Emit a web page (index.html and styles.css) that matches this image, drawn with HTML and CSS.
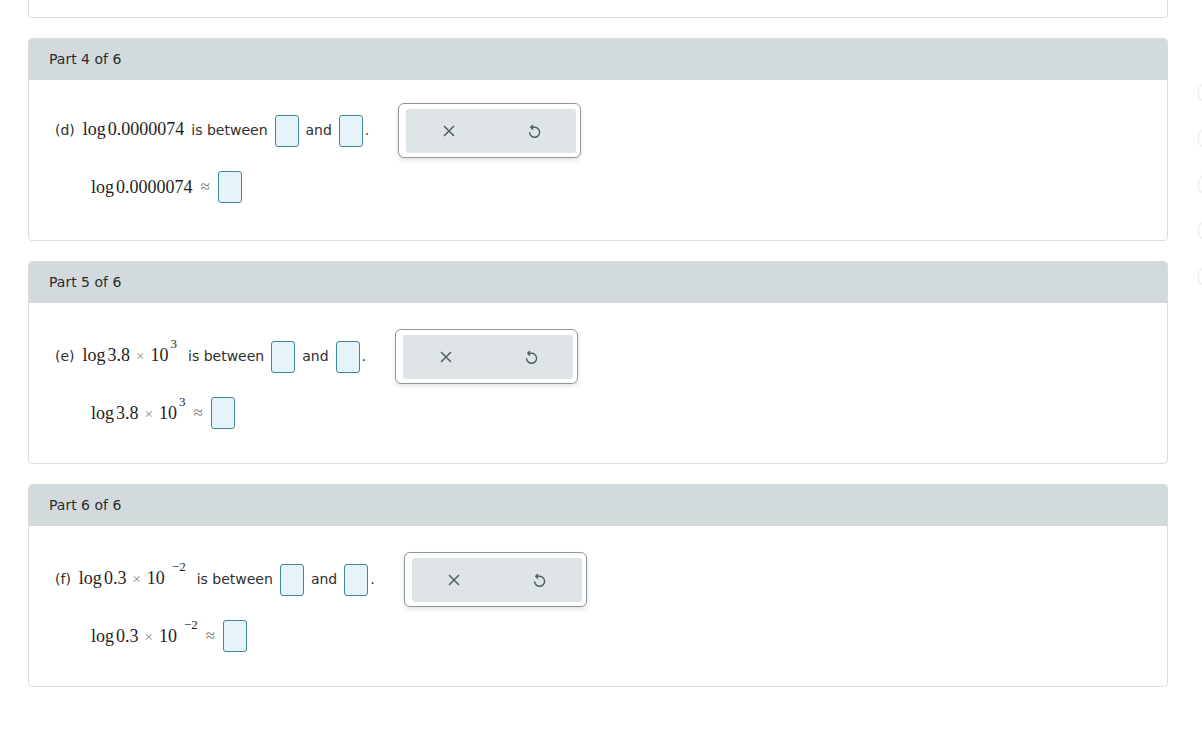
FILE: index.html
```html
<!DOCTYPE html>
<html>
<head>
<meta charset="utf-8">
<link rel="stylesheet" href="styles.css">
</head>
<body>
<div class="page">
  <div class="card-tail"></div>

  <section class="card">
    <div class="card-head">Part 4 of 6</div>
    <div class="card-body">
      <div class="row">
        <div class="q"><span class="lbl">(d)</span><span class="m"><span class="fn">log</span>0.0000074</span><span class="t">is between</span><span class="box"></span><span class="t">and</span><span class="box"></span><span class="dot">.</span></div>
        <div class="actions">
          <div class="actions-in">
            <button class="act"><svg width="14" height="14" viewBox="0 0 14 14"><path d="M2 2 L12 12 M12 2 L2 12" stroke="#4d5f66" stroke-width="1.5" fill="none"/></svg></button>
            <button class="act"><svg width="16" height="16" viewBox="0 0 16 16"><path d="M3.6 9.8 A5 5 0 1 0 8.2 4.3 H4.9 M6.6 2.4 L4.7 4.3 L6.6 6.2" stroke="#4d5f66" stroke-width="1.4" fill="none" stroke-linecap="round" stroke-linejoin="round"/></svg></button>
          </div>
        </div>
      </div>
      <div class="row2"><span class="m"><span class="fn">log</span>0.0000074</span><span class="approx">≈</span><span class="box"></span></div>
    </div>
  </section>

  <section class="card">
    <div class="card-head">Part 5 of 6</div>
    <div class="card-body shift">
      <div class="row">
        <div class="q"><span class="lbl">(e)</span><span class="m"><span class="fn">log</span>3.8<span class="times">×</span>10<span class="sup">3</span></span><span class="t gap">is between</span><span class="box"></span><span class="t">and</span><span class="box"></span><span class="dot">.</span></div>
        <div class="actions">
          <div class="actions-in">
            <button class="act"><svg width="14" height="14" viewBox="0 0 14 14"><path d="M2 2 L12 12 M12 2 L2 12" stroke="#4d5f66" stroke-width="1.5" fill="none"/></svg></button>
            <button class="act"><svg width="16" height="16" viewBox="0 0 16 16"><path d="M3.6 9.8 A5 5 0 1 0 8.2 4.3 H4.9 M6.6 2.4 L4.7 4.3 L6.6 6.2" stroke="#4d5f66" stroke-width="1.4" fill="none" stroke-linecap="round" stroke-linejoin="round"/></svg></button>
          </div>
        </div>
      </div>
      <div class="row2"><span class="m"><span class="fn">log</span>3.8<span class="times">×</span>10<span class="sup">3</span></span><span class="approx">≈</span><span class="box"></span></div>
    </div>
  </section>

  <section class="card">
    <div class="card-head">Part 6 of 6</div>
    <div class="card-body shift">
      <div class="row">
        <div class="q"><span class="lbl">(f)</span><span class="m"><span class="fn">log</span>0.3<span class="times">×</span>10<span class="sup neg">−2</span></span><span class="t gap">is between</span><span class="box"></span><span class="t">and</span><span class="box"></span><span class="dot">.</span></div>
        <div class="actions">
          <div class="actions-in">
            <button class="act"><svg width="14" height="14" viewBox="0 0 14 14"><path d="M2 2 L12 12 M12 2 L2 12" stroke="#4d5f66" stroke-width="1.5" fill="none"/></svg></button>
            <button class="act"><svg width="16" height="16" viewBox="0 0 16 16"><path d="M3.6 9.8 A5 5 0 1 0 8.2 4.3 H4.9 M6.6 2.4 L4.7 4.3 L6.6 6.2" stroke="#4d5f66" stroke-width="1.4" fill="none" stroke-linecap="round" stroke-linejoin="round"/></svg></button>
          </div>
        </div>
      </div>
      <div class="row2"><span class="m"><span class="fn">log</span>0.3<span class="times">×</span>10<span class="sup neg">−2</span></span><span class="approx">≈</span><span class="box"></span></div>
    </div>
  </section>
</div>

<div class="rail">
  <span class="dotc"></span>
  <span class="dotc"></span>
  <span class="dotc"></span>
  <span class="dotc"></span>
  <span class="dotc"></span>
</div>
</body>
</html>
```

FILE: styles.css
```css
html, body {
  margin: 0;
  padding: 0;
  background: #ffffff;
}
body {
  font-family: "DejaVu Sans", Verdana, sans-serif;
  font-size: 14px;
  color: #2e2e2e;
  overflow: hidden;
}
.page {
  padding-left: 28px;
  display: flex;
  flex-direction: column;
  gap: 20px;
}
.card-tail {
  width: 1140px;
  height: 18px;
  box-sizing: border-box;
  border: 1px solid #dcdcdc;
  border-top: none;
  border-radius: 0 0 4px 4px;
}
.card {
  width: 1140px;
  height: 203px;
  box-sizing: border-box;
  border: 1px solid #dcdcdc;
  border-radius: 4px;
  overflow: hidden;
}
.card-head {
  height: 42px;
  margin: -1px -1px 0;
  background: #d3dadd;
  display: flex;
  align-items: center;
  padding-left: 21px;
  font-size: 14px;
  color: #2b2b2b;
}
.card-body {
  padding: 23px 0 0 26px;
}
.card-body.shift {
  padding-top: 26px;
}
.row {
  display: flex;
  align-items: center;
  height: 55px;
}
.q {
  white-space: nowrap;
  line-height: 20px;
}
.lbl {
  margin-right: 8px;
}
.m {
  font-family: "Liberation Serif", "Times New Roman", serif;
  font-size: 18px;
  color: #1e1e1e;
  white-space: nowrap;
}
.fn {
  margin-right: 2px;
}
.times {
  color: #8a8a8a;
  font-size: 15px;
  margin: 0 6px;
}
.sup {
  font-size: 13px;
  vertical-align: 13px;
  line-height: 0;
  margin-left: 2px;
}
.sup.neg {
  margin-left: 7px;
}
.t {
  margin-left: 7px;
}
.t.gap {
  margin-left: 11px;
}
.box {
  display: inline-block;
  width: 24px;
  height: 32px;
  box-sizing: border-box;
  border: 1px solid #3e8794;
  border-radius: 3px;
  background: #e6f3f8;
  margin-left: 7px;
  vertical-align: middle;
}
.dot {
  margin-left: 2px;
}
.actions {
  margin-left: 29px;
  width: 183px;
  height: 55px;
  box-sizing: border-box;
  border: 1px solid #8d999d;
  border-radius: 6px;
  background: #fff;
  box-shadow: 0 2px 4px rgba(0, 0, 0, 0.12);
  padding: 5px 4px 4px 7px;
}
.actions-in {
  height: 100%;
  background: #dfe5e7;
  border-radius: 3px;
  display: flex;
}
.act {
  flex: 1;
  border: none;
  background: transparent;
  padding: 0;
  margin: 0;
  display: flex;
  align-items: center;
  justify-content: center;
  cursor: pointer;
}
.row2 {
  margin-top: 13px;
  padding-left: 36px;
  height: 32px;
  display: flex;
  align-items: center;
  white-space: nowrap;
}
.row2 .m {
  line-height: 20px;
}
.approx {
  color: #777;
  font-family: "Liberation Serif", serif;
  font-size: 17px;
  margin-left: 8px;
}
.row2 .box {
  margin-left: 8px;
}
.rail {
  position: fixed;
  top: 82px;
  left: 1197px;
  width: 5px;
  overflow: hidden;
  display: flex;
  flex-direction: column;
  gap: 25px;
}
.dotc {
  display: block;
  width: 21px;
  height: 21px;
  box-sizing: border-box;
  border: 2px solid #f2f2f2;
  border-radius: 50%;
  flex: none;
}
```
